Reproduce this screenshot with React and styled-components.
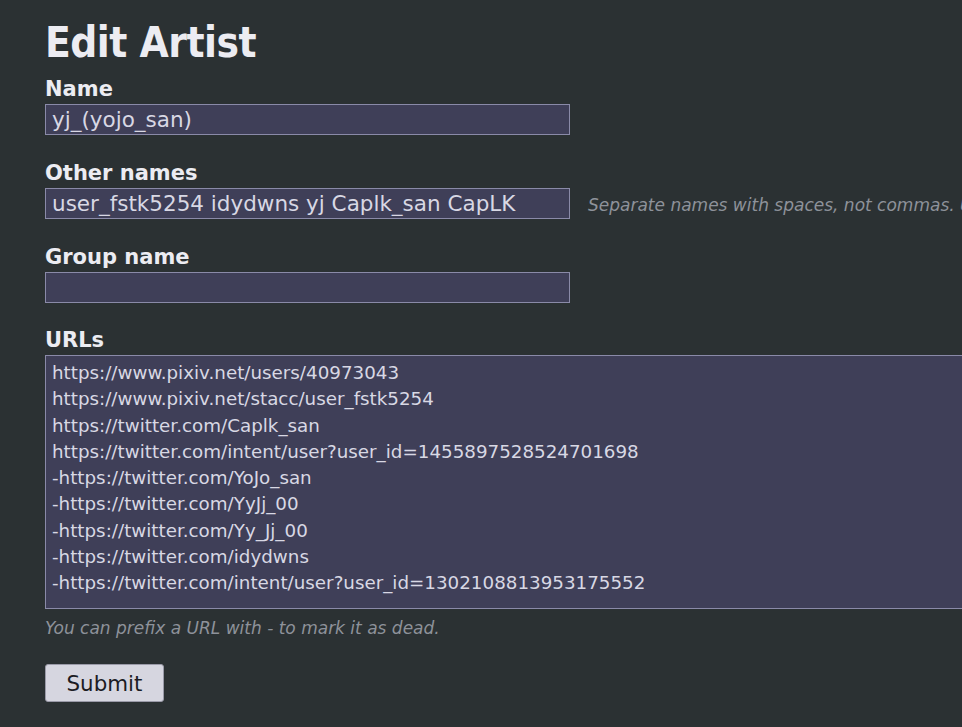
import React from "react";
import styled, { createGlobalStyle } from "styled-components";

const GlobalStyle = createGlobalStyle`
  html, body {
    margin: 0;
    padding: 0;
    background: #2b3133;
  }
  body {
    font-family: "DejaVu Sans", Verdana, sans-serif;
    color: #ececf2;
    overflow: hidden;
  }
`;

const Page = styled.div`
  padding: 19px 0 0 45px;
  width: 1100px;
`;

const Title = styled.h1`
  margin: 0 0 10px;
  font-family: "DejaVu Sans Condensed", "DejaVu Sans", sans-serif;
  font-size: 42px;
  line-height: 48px;
  font-weight: bold;
  letter-spacing: -0.5px;
  color: #ececf2;
`;

const Form = styled.form`
  display: flex;
  flex-direction: column;
`;

const Field = styled.div`
  display: flex;
  flex-direction: column;
  margin-bottom: ${(p) => p.$gap || 26}px;
`;

const Label = styled.label`
  font-size: 21px;
  line-height: 24px;
  font-weight: bold;
  color: #ececf2;
  margin-bottom: 3px;
`;

const Row = styled.div`
  display: flex;
  align-items: center;
  gap: 18px;
`;

const TextInput = styled.input`
  box-sizing: border-box;
  flex: 0 0 auto;
  width: 525px;
  height: 31px;
  margin: 0;
  padding: 0 6px;
  background: #3f3f58;
  border: 1px solid #8a8aa8;
  border-radius: 0;
  color: #d8d8e4;
  font-family: "DejaVu Sans", Verdana, sans-serif;
  font-size: 21.5px;
  outline: none;
`;

const Hint = styled.span`
  font-size: 17px;
  font-style: italic;
  color: #8e929a;
  white-space: nowrap;
  margin-top: ${(p) => p.$top || 0}px;
`;

const UrlBox = styled.textarea`
  box-sizing: border-box;
  width: 1000px;
  height: 254px;
  margin: 0;
  padding: 4px 6px;
  background: #3f3f58;
  border: 1px solid #8a8aa8;
  border-radius: 0;
  color: #d8d8e4;
  font-family: "DejaVu Sans", Verdana, sans-serif;
  font-size: 18.3px;
  line-height: 26.3px;
  resize: none;
  outline: none;
  overflow: hidden;
`;

const SubmitButton = styled.button`
  box-sizing: border-box;
  align-self: flex-start;
  width: 119px;
  height: 38px;
  margin: 0;
  padding: 0;
  background: #d6d6e0;
  border: 1px solid #9a9aa8;
  border-radius: 3px;
  color: #1c1c24;
  font-family: "DejaVu Sans", Verdana, sans-serif;
  font-size: 21.4px;
`;

const urls = [
  "https://www.pixiv.net/users/40973043",
  "https://www.pixiv.net/stacc/user_fstk5254",
  "https://twitter.com/Caplk_san",
  "https://twitter.com/intent/user?user_id=1455897528524701698",
  "-https://twitter.com/YoJo_san",
  "-https://twitter.com/YyJj_00",
  "-https://twitter.com/Yy_Jj_00",
  "-https://twitter.com/idydwns",
  "-https://twitter.com/intent/user?user_id=1302108813953175552",
].join("\n");

export default function App() {
  return (
    <>
      <GlobalStyle />
      <Page>
        <Title>Edit Artist</Title>
        <Form onSubmit={(e) => e.preventDefault()}>
          <Field>
            <Label htmlFor="artist-name">Name</Label>
            <TextInput id="artist-name" defaultValue="yj_(yojo_san)" />
          </Field>
          <Field>
            <Label htmlFor="artist-other">Other names</Label>
            <Row>
              <TextInput
                id="artist-other"
                defaultValue="user_fstk5254 idydwns yj Caplk_san CapLK"
              />
              <Hint $top={3}>
                Separate names with spaces, not commas. Use underscores for spaces inside names.
              </Hint>
            </Row>
          </Field>
          <Field $gap={25}>
            <Label htmlFor="artist-group">Group name</Label>
            <TextInput id="artist-group" defaultValue="" />
          </Field>
          <Field $gap={26}>
            <Label htmlFor="artist-urls">URLs</Label>
            <UrlBox id="artist-urls" defaultValue={urls} spellCheck={false} />
            <Hint $top={9}>You can prefix a URL with - to mark it as dead.</Hint>
          </Field>
          <SubmitButton type="submit">Submit</SubmitButton>
        </Form>
      </Page>
    </>
  );
}
